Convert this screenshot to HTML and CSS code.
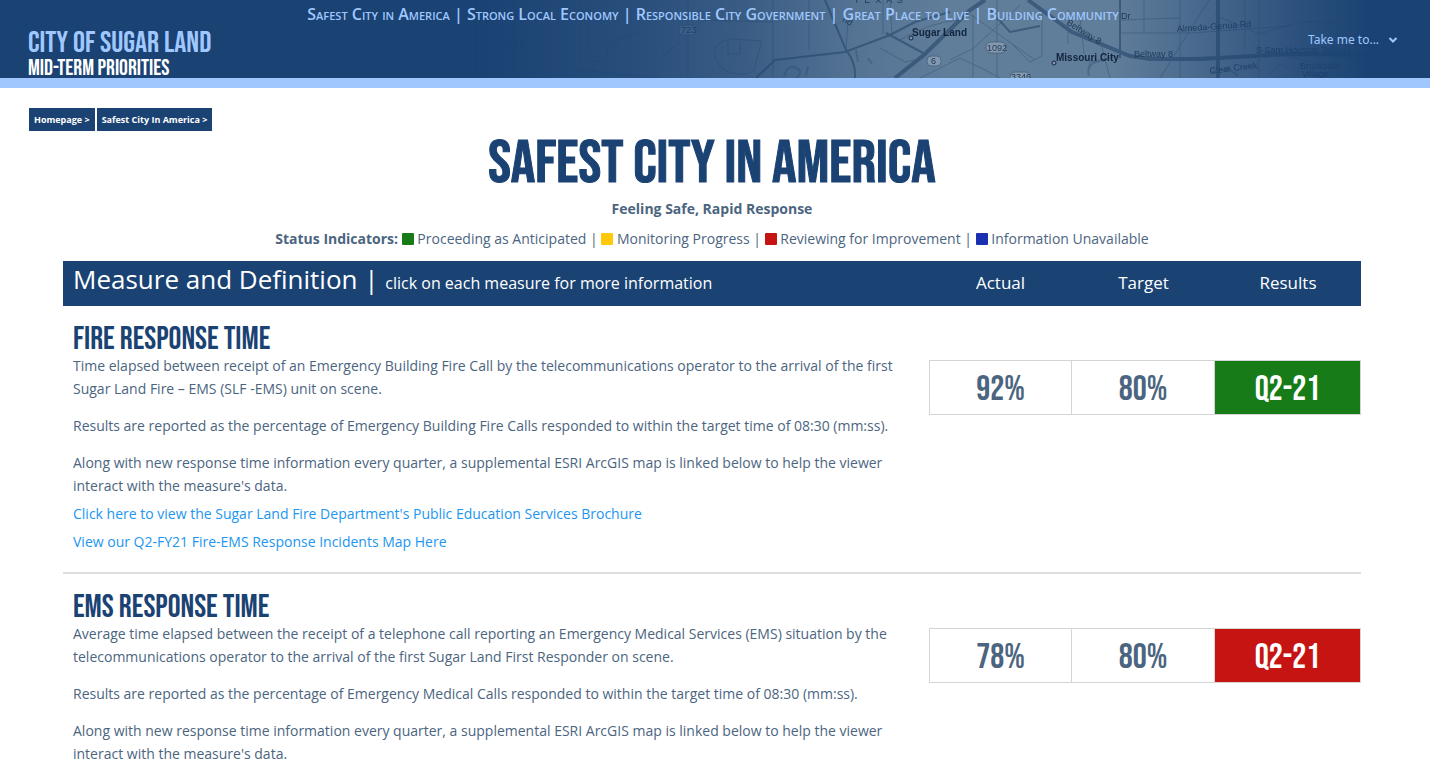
FILE: index.html
```html
<!DOCTYPE html>
<html lang="en">
<head>
<meta charset="utf-8">
<title>Safest City in America</title>
<meta name="viewport" content="width=device-width, initial-scale=1">
<link rel="stylesheet" href="styles.css">
</head>
<body>
<header class="site-header">
  <svg class="map" viewBox="0 0 1430 78" preserveAspectRatio="xMidYMid slice" aria-hidden="true">
    <defs>
      <linearGradient id="fade" x1="0" x2="1">
        <stop offset="0.33" stop-color="#fff" stop-opacity="0"/>
        <stop offset="0.44" stop-color="#fff" stop-opacity="0.2"/>
        <stop offset="0.52" stop-color="#fff" stop-opacity="0.45"/>
        <stop offset="0.6" stop-color="#fff" stop-opacity="0.85"/>
        <stop offset="0.66" stop-color="#fff" stop-opacity="1"/>
        <stop offset="0.78" stop-color="#fff" stop-opacity="1"/>
        <stop offset="0.85" stop-color="#fff" stop-opacity="0.6"/>
        <stop offset="0.91" stop-color="#fff" stop-opacity="0.25"/>
        <stop offset="0.96" stop-color="#fff" stop-opacity="0"/>
      </linearGradient>
      <mask id="edge"><rect width="1430" height="78" fill="url(#fade)"/></mask>
    </defs>
    <g mask="url(#edge)">
      <rect class="land" width="1430" height="78"/>
      <g class="street">
        <path d="M688 0V78M588 25L590 62L606 60L608 44L640 32M500 50L560 68L660 78M660 58L680 42"/>
        <path d="M773 0V78M809 0V50M848 22L846 50M773 22L700 20M714 54Q716 40 732 39L762 41L756 62Q756 72 746 74Q720 76 714 54ZM728 40V54H740V42"/>
        <path d="M883 0V34M890 0L892 36M900 40Q930 22 960 20M880 48L905 62L924 58M920 78L960 58L985 70L1000 78"/>
        <path d="M973 15V78M997 0V78M950 60L974 48L1020 5M970 14L1035 60M1042 14V56L1030 62L1012 44M1068 10V44M1080 16L1084 54M1100 40L1110 78M1118 56L1090 62L1088 70M1120 33H1192L1290 26M1144 0V33M1120 20L1180 18M1180 0V58M1209 0L1160 78"/>
        <path d="M1245 0V50M1259 0V78M1215 15L1259 34L1300 22H1430M1260 50L1320 64M1180 78V58L1240 56M1270 74Q1280 58 1290 70M1338 0V78"/>
      </g>
      <g class="road">
        <path d="M756 78L775 60L845 52L890 35L915 22L950 12M825 0L846 50Q856 62 855 78M886 33L925 54M990 10L1010 32L1040 26M1120 0V58"/>
      </g>
      <g class="highway">
        <path d="M895 78L925 54L970 10L985 0M1028 0L1072 32L1130 56L1150 59H1200L1290 54L1430 56M1218 0V78"/>
      </g>
      <g class="lake">
        <path d="M784 76Q788 64 796 68Q804 72 796 78M808 66L806 76M856 50L858 62M868 58L872 64M1105 60Q1085 62 1089 76M1212 72L1228 68L1238 76"/>
      </g>
      <g class="shield">
        <rect x="679" y="25" width="17" height="10" rx="4"/><rect x="927" y="56" width="14" height="10" rx="4"/>
        <rect x="986" y="42" width="20" height="11" rx="5"/><rect x="1010" y="72" width="20" height="11" rx="5"/>
      </g>
      <g class="label small">
        <text x="681" y="33">723</text><text x="931" y="64">6</text><text x="987" y="51">1092</text><text x="1011" y="80">3346</text>
        <text x="492" y="46">Orchard</text>
        <text x="854" y="3">T &#160;E &#160;X &#160;A &#160;S</text>
        <text x="842" y="21" transform="rotate(30 842 21)">nd</text>
        <text x="1177" y="32" transform="rotate(-4 1177 32)">Almeda-Genoa Rd</text>
        <text x="1134" y="57">Beltway 8</text>
        <text x="1256" y="53">S Sam Houston Tollway</text>
        <text x="1210" y="74" transform="rotate(-7 1210 74)">Clear Creek</text>
        <text x="1300" y="69">Brookside</text><text x="1302" y="77">Village</text>
        <text x="1066" y="24" transform="rotate(32 1066 24)">Beltway 8</text>
        <text x="1121" y="19">Dr</text>
      </g>
      <g class="label">
        <text x="912" y="36">Sugar Land</text><text x="1056" y="61">Missouri City</text>
        <circle cx="911" cy="38" r="2"/><circle cx="1054" cy="63" r="2"/>
      </g>
    </g>
  </svg>
  <a class="brand" href="#"><span class="brand-city">City of Sugar Land</span><span class="brand-sub">Mid-Term Priorities</span></a>
  <nav class="main-nav" aria-label="Priorities">
    <a href="#">Safest City in America</a> | <a href="#">Strong Local Economy</a> | <a href="#">Responsible City Government</a> | <a href="#">Great Place to Live</a> | <a href="#">Building Community</a>
  </nav>
  <div class="jump">
    <select class="jump-select" aria-label="Take me to">
      <option>Take me to...</option>
    </select>
    <svg class="chevron" viewBox="0 0 10 8" aria-hidden="true"><path d="M1.5 2L5 5.5L8.5 2"/></svg>
  </div>
</header>
<nav class="crumbs" aria-label="Breadcrumb"><a href="#">Homepage &gt;</a><a href="#">Safest City In America &gt;</a></nav>
<main class="content">
  <h1 class="title">Safest City in America</h1>
  <p class="tagline">Feeling Safe, Rapid Response</p>
  <p class="legend"><b>Status Indicators:</b> <i class="swatch ok"></i> Proceeding as Anticipated | <i class="swatch watch"></i> Monitoring Progress | <i class="swatch review"></i> Reviewing for Improvement | <i class="swatch none"></i> Information Unavailable</p>
  <table class="measures">
    <colgroup><col><col class="col-value"><col class="col-value"><col class="col-result"></colgroup>
    <thead>
      <tr><th scope="col" class="head-measure"><span class="head-large">Measure and Definition | </span>click on each measure for more information</th><th scope="col">Actual</th><th scope="col">Target</th><th scope="col">Results</th></tr>
    </thead>
    <tbody>
      <tr>
        <td class="measure">
          <h2>Fire Response Time</h2>
          <p>Time elapsed between receipt of an Emergency Building Fire Call by the telecommunications operator to the arrival of the first Sugar Land Fire – EMS (SLF -EMS) unit on scene.</p>
          <p>Results are reported as the percentage of Emergency Building Fire Calls responded to within the target time of 08:30 (mm:ss).</p>
          <p>Along with new response time information every quarter, a supplemental ESRI ArcGIS map is linked below to help the viewer interact with the measure's data.</p>
          <a href="#">Click here to view the Sugar Land Fire Department's Public Education Services Brochure</a>
          <a href="#">View our Q2-FY21 Fire-EMS Response Incidents Map Here</a>
        </td>
        <td><div class="value first">92%</div></td>
        <td><div class="value">80%</div></td>
        <td><div class="value result ok">Q2-21</div></td>
      </tr>
      <tr>
        <td class="measure">
          <h2>EMS Response Time</h2>
          <p>Average time elapsed between the receipt of a telephone call reporting an Emergency Medical Services (EMS) situation by the telecommunications operator to the arrival of the first Sugar Land First Responder on scene.</p>
          <p>Results are reported as the percentage of Emergency Medical Calls responded to within the target time of 08:30 (mm:ss).</p>
          <p>Along with new response time information every quarter, a supplemental ESRI ArcGIS map is linked below to help the viewer interact with the measure's data.</p>
        </td>
        <td><div class="value first">78%</div></td>
        <td><div class="value">80%</div></td>
        <td><div class="value result review">Q2-21</div></td>
      </tr>
    </tbody>
  </table>
</main>
</body>
</html>
```
FILE: styles.css
```css
:root {
  --navy: #1a4273;
  --sky: #a0c8ff;
  --slate: #4b6580;
  --line: #d5d5d5;
  --display: "Bebas Neue", "Liberation Sans Narrow", "Roboto Condensed", sans-serif;
}
* { box-sizing: border-box; }
body { margin: 0; background: #fff; color: var(--slate); font: 14px/23px "Open Sans", sans-serif; }
a { text-decoration: none; }
h1, h2, p { margin: 0; }

.site-header {
  position: relative;
  display: grid;
  grid-template-columns: 1fr auto 1fr;
  height: 88px;
  padding: 0 32px 0 28px;
  background: var(--navy);
  border-bottom: 10px solid var(--sky);
  color: var(--sky);
}
.map { position: absolute; inset: 0; width: 100%; height: 100%; }
.land { fill: #607d9a; }
.street, .road, .highway, .lake { fill: none; }
.street { stroke: #4b6885; stroke-width: 1; }
.road { stroke: #3d5c7c; stroke-width: 2; }
.highway { stroke: #3d5b7c; stroke-width: 4; }
.lake { stroke: #4d6b8a; stroke-width: 2; }
.shield { fill: #8499ae; stroke: #4b6885; }
.label { fill: #12243d; font: bold 10px "Liberation Sans", sans-serif; }
.label circle { fill: #8499ae; stroke: #12243d; }
.label.small { fill: #213a57; font-size: 9px; font-weight: normal; }
.brand { position: relative; display: flex; flex-direction: column; justify-content: flex-end; font-family: var(--display); text-transform: uppercase; white-space: nowrap; }
.brand-city { color: var(--sky); font-size: 30px; line-height: 32px; }
.brand-sub { color: #fff; font-size: 22px; line-height: 19px; }
.main-nav { position: relative; padding-top: 3px; font-size: 16px; font-weight: 600; font-variant: small-caps; }
.main-nav a { color: var(--sky); }
.jump { position: relative; justify-self: end; align-self: center; display: flex; align-items: center; gap: 8px; padding-top: 2px; }
.jump-select { appearance: none; border: 0; padding: 0; background: transparent; color: var(--sky); font: 12px/20px "Noto Sans", "Open Sans", sans-serif; }
.chevron { width: 10px; fill: none; stroke: var(--sky); stroke-width: 2; }

.crumbs { display: flex; gap: 2px; padding: 20px 29px 0; }
.crumbs a { padding: 0 5px; background: var(--navy); color: #fff; font-size: 9px; font-weight: bold; }

.content { padding: 0 69px 0 63px; text-align: center; }
.title { padding-top: 3px; color: var(--navy); font: 61px/60px var(--display); text-transform: uppercase; -webkit-text-stroke: 1px var(--navy); }
.tagline { padding-top: 3px; font-weight: bold; }
.legend { padding: 7px 0 11px; }
.swatch { display: inline-block; width: 12px; height: 12px; border-radius: 1px; vertical-align: -1px; }
.ok { background: #177b17; }
.watch { background: #ffc90a; }
.review { background: #c61412; }
.none { background: #1a30b0; }

.measures { width: 100%; border-collapse: collapse; table-layout: fixed; }
.col-value { width: 143px; }
.col-result { width: 146px; }
th { height: 45px; padding: 0 0 2px; background: var(--navy); color: #fff; font-size: 17px; font-weight: normal; }
.head-measure { padding: 0 0 4px 10px; font-size: 16px; text-align: left; }
.head-large { font-size: 26px; }
td { padding: 54px 0 0; vertical-align: top; }
.measure { padding: 20px 30px 0 10px; text-align: left; }
tbody tr { border-bottom: 2px solid #dedede; }
tbody tr:last-child { border-bottom: 0; }
h2 { color: var(--navy); font: 32px/28px var(--display); text-transform: uppercase; }
.measure p { margin-bottom: 14px; }
.measure p:last-of-type { margin-bottom: 5px; }
.measure a { display: block; margin-bottom: 5px; color: #2196f0; }
.measure a:last-child { margin-bottom: 19px; }
.value { height: 55px; padding-top: 4px; border: 1px solid var(--line); border-left: 0; font: 35px/49px var(--display); }
.first { border-left: 1px solid var(--line); }
.result { color: #fff; }
```
